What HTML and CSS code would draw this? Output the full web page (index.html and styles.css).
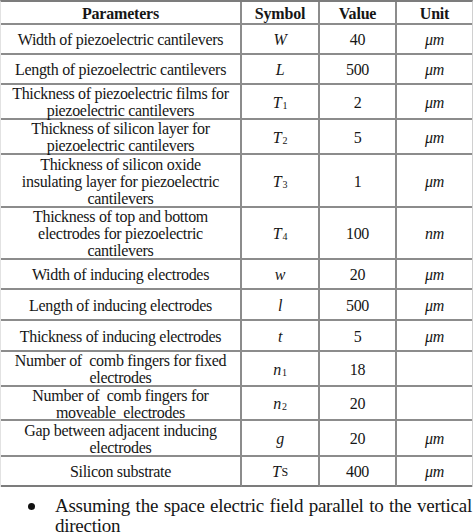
FILE: index.html
```html
<!DOCTYPE html>
<html>
<head>
<meta charset="utf-8">
<link rel="stylesheet" href="styles.css">
</head>
<body>
<div class="table">
  <div class="cell head">Parameters</div>
  <div class="cell head">Symbol</div>
  <div class="cell head">Value</div>
  <div class="cell head last">Unit</div>

  <div class="cell">Width of piezoelectric cantilevers</div>
  <div class="cell sym">W</div>
  <div class="cell">40</div>
  <div class="cell unit last">μm</div>

  <div class="cell">Length of piezoelectric cantilevers</div>
  <div class="cell sym">L</div>
  <div class="cell">500</div>
  <div class="cell unit last">μm</div>

  <div class="cell">Thickness of piezoelectric films for<br>piezoelectric cantilevers</div>
  <div class="cell sym">T<span class="sub">1</span></div>
  <div class="cell">2</div>
  <div class="cell unit last">μm</div>

  <div class="cell">Thickness of silicon layer for<br>piezoelectric cantilevers</div>
  <div class="cell sym">T<span class="sub">2</span></div>
  <div class="cell">5</div>
  <div class="cell unit last">μm</div>

  <div class="cell">Thickness of silicon oxide<br>insulating layer for piezoelectric<br>cantilevers</div>
  <div class="cell sym">T<span class="sub">3</span></div>
  <div class="cell">1</div>
  <div class="cell unit last">μm</div>

  <div class="cell">Thickness of top and bottom<br>electrodes for piezoelectric<br>cantilevers</div>
  <div class="cell sym">T<span class="sub">4</span></div>
  <div class="cell">100</div>
  <div class="cell unit last">nm</div>

  <div class="cell">Width of inducing electrodes</div>
  <div class="cell sym">w</div>
  <div class="cell">20</div>
  <div class="cell unit last">μm</div>

  <div class="cell">Length of inducing electrodes</div>
  <div class="cell sym">l</div>
  <div class="cell">500</div>
  <div class="cell unit last">μm</div>

  <div class="cell">Thickness of inducing electrodes</div>
  <div class="cell sym">t</div>
  <div class="cell">5</div>
  <div class="cell unit last">μm</div>

  <div class="cell">Number of &nbsp;comb fingers for fixed<br>electrodes</div>
  <div class="cell sym">n<span class="sub">1</span></div>
  <div class="cell">18</div>
  <div class="cell unit last"></div>

  <div class="cell">Number of &nbsp;comb fingers for<br>moveable &nbsp;electrodes</div>
  <div class="cell sym">n<span class="sub">2</span></div>
  <div class="cell">20</div>
  <div class="cell unit last"></div>

  <div class="cell">Gap between adjacent inducing<br>electrodes</div>
  <div class="cell sym">g</div>
  <div class="cell">20</div>
  <div class="cell unit last">μm</div>

  <div class="cell">Silicon substrate</div>
  <div class="cell sym">T<span class="subs">S</span></div>
  <div class="cell">400</div>
  <div class="cell unit last">μm</div>
</div>
<div class="note">
  <span class="bullet"><span class="dot"></span></span>
  <p class="note-text">Assuming the space electric field parallel to the vertical direction</p>
</div>
</body>
</html>
```
FILE: styles.css
```css
html, body {
  margin: 0;
  padding: 0;
  background: #ffffff;
}
body {
  width: 474px;
  height: 532px;
  overflow: hidden;
  font-family: "Liberation Serif", "Times New Roman", Times, serif;
  color: #161616;
}
.table {
  display: grid;
  width: 473px;
  box-sizing: border-box;
  grid-template-columns: 241px 78px 77px 75px;
  grid-template-rows: 23px 30px 30px 35px 35px 53px 52px 30px 31px 31px 35px 34px 36px 30px;
  border-top: 2px solid #7c7c7c;
  border-left: 1px solid #e2e2e2;
  border-right: 1px solid #d0d0d0;
}
.cell {
  box-sizing: border-box;
  display: flex;
  align-items: center;
  justify-content: center;
  text-align: center;
  font-size: 16px;
  line-height: 17px;
  letter-spacing: -0.3px;
  border-bottom: 2px solid #8c8c8c;
  border-right: 2px solid #8c8c8c;
  padding-top: 1px;
}
.cell.last {
  border-right: none;
}
.cell:nth-last-child(-n+4) {
  border-bottom-color: #7c7c7c;
}
.head {
  font-weight: bold;
  letter-spacing: -0.2px;
}
.sym, .unit {
  font-style: italic;
}
.sub {
  font-style: normal;
  font-size: 10px;
  position: relative;
  top: 3px;
  margin-left: 1px;
}
.subs {
  font-style: normal;
  font-size: 12px;
  position: relative;
  top: 1px;
  margin-left: 1px;
}
.note {
  display: flex;
  margin-top: 9px;
  font-size: 19px;
  line-height: 20px;
}
.bullet {
  width: 55px;
  height: 20px;
  box-sizing: border-box;
  padding-left: 28px;
  padding-top: 7px;
  flex: none;
}
.dot {
  display: block;
  width: 7px;
  height: 7px;
  border-radius: 50%;
  background: #111111;
}
.note-text {
  margin: 0;
  width: 417px;
  text-align: justify;
  letter-spacing: -0.25px;
}
```
